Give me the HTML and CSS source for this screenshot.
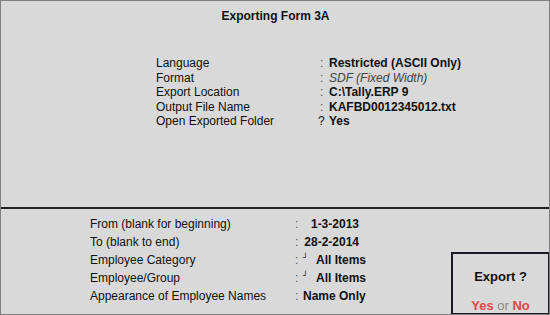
FILE: index.html
```html
<!DOCTYPE html>
<html lang="en">
  <head>
    <meta charset="UTF-8" />
    <title>Exporting Form 3A</title>
    <link rel="stylesheet" href="styles.css">
  </head>
  <body>
    <div class="screen">
      <div class="top-panel">
        <h1 class="title">Exporting Form 3A</h1>
        <div class="config-grid">
          <span class="label">Language</span>
          <span class="mark">:</span>
          <span class="value">Restricted (ASCII Only)</span>

          <span class="label">Format</span>
          <span class="mark">:</span>
          <span class="value italic">SDF (Fixed Width)</span>

          <span class="label">Export Location</span>
          <span class="mark">:</span>
          <span class="value">C:\Tally.ERP 9</span>

          <span class="label">Output File Name</span>
          <span class="mark">:</span>
          <span class="value">KAFBD0012345012.txt</span>

          <span class="label">Open Exported Folder</span>
          <span class="mark ask">?</span>
          <span class="value">Yes</span>
        </div>
      </div>
      <div class="bottom-panel">
        <div class="filter-grid">
          <span class="label">From (blank for beginning)</span>
          <span class="mark">:</span>
          <span class="value"><span class="date">1-3-2013</span></span>

          <span class="label">To (blank to end)</span>
          <span class="mark">:</span>
          <span class="value"><span class="date">28-2-2014</span></span>

          <span class="label">Employee Category</span>
          <span class="mark">:</span>
          <span class="value"><span class="corner">┘</span>All Items</span>

          <span class="label">Employee/Group</span>
          <span class="mark">:</span>
          <span class="value"><span class="corner">┘</span>All Items</span>

          <span class="label">Appearance of Employee Names</span>
          <span class="mark">:</span>
          <span class="value">Name Only</span>
        </div>
        <div class="confirm-box">
          <div class="confirm-title">Export ?</div>
          <div class="confirm-choice">
            <span class="choice">Yes</span> <span class="or">or</span> <span class="choice">No</span>
          </div>
        </div>
      </div>
    </div>
  </body>
</html>
```

FILE: styles.css
```css
* {
  margin: 0;
  padding: 0;
  box-sizing: border-box;
  font-family: "Liberation Sans", Arial, sans-serif;
}
body {
  background: #d9d9d9;
}
.screen {
  width: 550px;
  height: 315px;
  border: 1px solid #808080;
  background: #d9d9d9;
  color: #111;
  font-size: 12px;
  display: flex;
  flex-direction: column;
  overflow: hidden;
}
.top-panel {
  height: 206px;
  padding-top: 8px;
}
.title {
  font-size: 12px;
  font-weight: bold;
  line-height: 14px;
  text-align: center;
  margin-left: 1px;
}
.config-grid {
  display: grid;
  grid-template-columns: 162px 11px auto;
  line-height: 14.5px;
  margin-top: 33px;
  margin-left: 155px;
}
.mark {
  color: #555;
  padding-left: 2px;
}
.mark.ask {
  color: #111;
  padding-left: 0;
}
.value {
  font-weight: bold;
  white-space: nowrap;
}
.value.italic {
  font-style: italic;
  font-weight: normal;
  color: #444;
}
.bottom-panel {
  flex: 1;
  border-top: 2px solid #222;
  display: flex;
  align-items: flex-start;
}
.filter-grid {
  display: grid;
  grid-template-columns: 203px 10px auto;
  line-height: 18px;
  margin-top: 6px;
  margin-left: 89px;
}
.date {
  display: inline-block;
  width: 56px;
  text-align: right;
}
.corner {
  display: inline-block;
  width: 13px;
  font-family: "DejaVu Sans", sans-serif;
  font-size: 8px;
  font-weight: bold;
  line-height: 8px;
  vertical-align: 4px;
}
.confirm-box {
  margin-left: auto;
  align-self: flex-end;
  width: 99px;
  height: 63px;
  margin-right: -1px;
  margin-bottom: -1px;
  border: 2px solid #1a1a24;
  text-align: center;
  padding-top: 16px;
}
.confirm-title {
  font-weight: bold;
  font-size: 13px;
  line-height: 14px;
}
.confirm-choice {
  margin-top: 15px;
  line-height: 14px;
  font-size: 13px;
}
.choice {
  color: #e04848;
  font-weight: bold;
}
.or {
  color: #8a8a8a;
}
```
